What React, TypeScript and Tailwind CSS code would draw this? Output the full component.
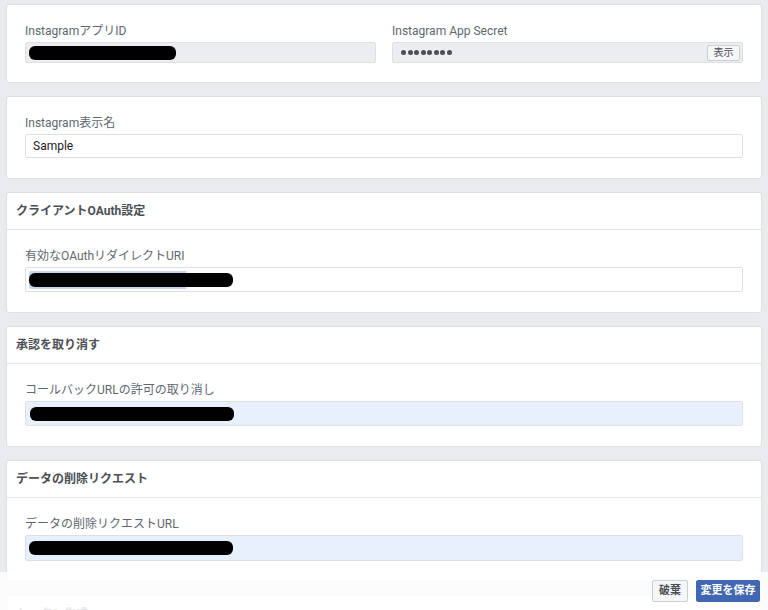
const font = "font-['Roboto','Noto_Sans_CJK_JP',sans-serif]";

function Redacted({ w }: { w: number }) {
  return <span className="block h-[14px] rounded-[6px] bg-black" style={{ width: w }} />;
}

function Label({ children }: { children: React.ReactNode }) {
  return <div className="mb-[3px] text-[12px] leading-[16px] text-[#606770]">{children}</div>;
}

function Card({ title, tight, children }: { title?: string; tight?: boolean; children: React.ReactNode }) {
  return (
    <section className="rounded-[3px] border border-[#dddfe2] bg-white">
      {title && (
        <header className="flex h-[37px] items-center border-b border-[#e5e5e5] px-[9px] text-[12px] font-bold text-[#4b4f56]">
          {title}
        </header>
      )}
      <div className={`px-[18px] pt-[18px] ${tight ? "pb-[19px]" : "pb-[20px]"}`}>{children}</div>
    </section>
  );
}

export default function App() {
  return (
    <div className={`${font} relative h-[610px] overflow-hidden bg-[#e9ebee]`}>
      <div className="flex flex-col gap-[13px] pl-[6px] pr-[6px] pt-[4px]">
        <Card tight>
          <div className="grid grid-cols-2 gap-[16px]">
            <div>
              <Label>InstagramアプリID</Label>
              <div className="flex h-[21px] items-center rounded-[2px] border border-[#dddfe2] bg-[#ebedf0] px-[3px]">
                <Redacted w={147} />
              </div>
            </div>
            <div>
              <Label>Instagram App Secret</Label>
              <div className="flex h-[21px] items-center justify-between rounded-[2px] border border-[#dddfe2] bg-[#ebedf0] pl-[8px] pr-[2px]">
                <span className="flex gap-[1.5px]">
                  {Array.from({ length: 8 }, (_, i) => (
                    <span key={i} className="block h-[5px] w-[5px] rounded-full bg-[#4b4f56]" />
                  ))}
                </span>
                <button className="flex h-[16px] w-[33px] items-center justify-center rounded-[2px] border border-[#ccd0d5] bg-[#f5f6f7] text-[10px] text-[#4b4f56]">
                  表示
                </button>
              </div>
            </div>
          </div>
        </Card>

        <Card>
          <Label>Instagram表示名</Label>
          <div className="flex h-[24px] items-center rounded-[2px] border border-[#dddfe2] bg-white px-[7px] text-[12px] text-[#1d2129]">
            Sample
          </div>
        </Card>

        <Card title="クライアントOAuth設定">
          <Label>有効なOAuthリダイレクトURI</Label>
          <div className="flex h-[25px] items-center rounded-[2px] border border-[#dddfe2] bg-white px-[3px]">
            <span className="block rounded-[2px] bg-[linear-gradient(to_right,#c5d5ee_157px,transparent_157px)] py-[2px]">
              <Redacted w={204} />
            </span>
          </div>
        </Card>

        <Card title="承認を取り消す">
          <Label>コールバックURLの許可の取り消し</Label>
          <div className="flex h-[25px] items-center rounded-[2px] border border-[#dddfe2] bg-[#e8f0fe] px-[4px]">
            <Redacted w={204} />
          </div>
        </Card>

        <Card title="データの削除リクエスト">
          <Label>データの削除リクエストURL</Label>
          <div className="flex h-[26px] items-center rounded-[2px] border border-[#dddfe2] bg-[#e8f0fe] px-[3px]">
            <Redacted w={204} />
          </div>
        </Card>

        <Card title="トークン生成">
          <div className="h-[60px]" />
        </Card>
      </div>

      <div className="absolute inset-x-0 bottom-0 flex h-[38px] items-center justify-end gap-[8px] bg-white/85 pr-[8px]">
        <button className="flex h-[22px] w-[36px] items-center justify-center rounded-[2px] border border-[#ccd0d5] bg-[#f5f6f7] text-[11px] font-bold text-[#4b4f56]">
          破棄
        </button>
        <button className="flex h-[22px] w-[64px] items-center justify-center rounded-[2px] border border-[#4267b2] bg-[#4267b2] text-[11px] font-bold text-white">
          変更を保存
        </button>
      </div>
    </div>
  );
}
